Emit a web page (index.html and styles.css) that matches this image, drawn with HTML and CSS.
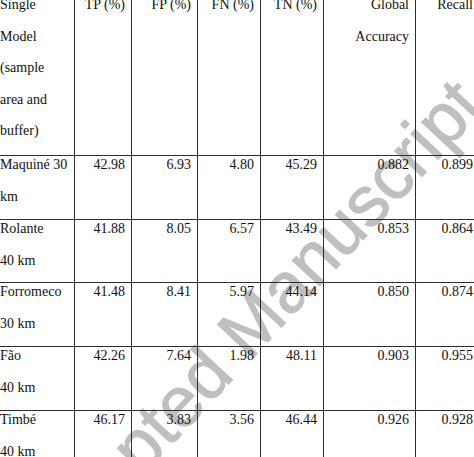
FILE: index.html
```html
<!DOCTYPE html>
<html lang="en">
<head>
<meta charset="utf-8">
<title>Single model accuracy</title>
<link rel="stylesheet" href="styles.css">
</head>
<body>
<div class="page">
  <div class="wm">Accepted Manuscript</div>
  <div class="tbl">
    <div class="c first"><span>Single</span><span>Model</span><span>(sample</span><span>area and</span><span>buffer)</span></div>
    <div class="c num"><span>TP (%)</span></div>
    <div class="c num"><span>FP (%)</span></div>
    <div class="c num"><span>FN (%)</span></div>
    <div class="c num"><span>TN (%)</span></div>
    <div class="c num"><span>Global</span><span>Accuracy</span></div>
    <div class="c num"><span>Recall</span></div>

    <div class="c first"><span>Maquiné 30</span><span>km</span></div>
    <div class="c num"><span>42.98</span></div>
    <div class="c num"><span>6.93</span></div>
    <div class="c num"><span>4.80</span></div>
    <div class="c num"><span>45.29</span></div>
    <div class="c num"><span>0.882</span></div>
    <div class="c num"><span>0.899</span></div>

    <div class="c first"><span>Rolante</span><span>40 km</span></div>
    <div class="c num"><span>41.88</span></div>
    <div class="c num"><span>8.05</span></div>
    <div class="c num"><span>6.57</span></div>
    <div class="c num"><span>43.49</span></div>
    <div class="c num"><span>0.853</span></div>
    <div class="c num"><span>0.864</span></div>

    <div class="c first"><span>Forromeco</span><span>30 km</span></div>
    <div class="c num"><span>41.48</span></div>
    <div class="c num"><span>8.41</span></div>
    <div class="c num"><span>5.97</span></div>
    <div class="c num"><span>44.14</span></div>
    <div class="c num"><span>0.850</span></div>
    <div class="c num"><span>0.874</span></div>

    <div class="c first"><span>Fão</span><span>40 km</span></div>
    <div class="c num"><span>42.26</span></div>
    <div class="c num"><span>7.64</span></div>
    <div class="c num"><span>1.98</span></div>
    <div class="c num"><span>48.11</span></div>
    <div class="c num"><span>0.903</span></div>
    <div class="c num"><span>0.955</span></div>

    <div class="c first"><span>Timbé</span><span>40 km</span></div>
    <div class="c num"><span>46.17</span></div>
    <div class="c num"><span>3.83</span></div>
    <div class="c num"><span>3.56</span></div>
    <div class="c num"><span>46.44</span></div>
    <div class="c num"><span>0.926</span></div>
    <div class="c num"><span>0.928</span></div>
  </div>
</div>
</body>
</html>
```
FILE: styles.css
```css
html, body {
  margin: 0;
  padding: 0;
  background: #fff;
}

.page {
  position: relative;
  width: 474px;
  height: 457px;
  overflow: hidden;
  background: #fff;
}

.wm {
  position: absolute;
  left: -10px;
  top: 552px;
  transform-origin: 0 0;
  transform: rotate(-47deg);
  font-family: "Liberation Sans", Arial, sans-serif;
  font-size: 71px;
  line-height: 1;
  color: #bfbfbf;
  white-space: nowrap;
  -webkit-text-stroke: 1px #bfbfbf;
  z-index: 0;
}

.tbl {
  position: relative;
  z-index: 1;
  display: grid;
  grid-template-columns: 75px 57px 66px 63px 63px 92px 64px;
  grid-template-rows: 160px 64px 63px 64px 64px 64px;
  margin-top: -4px;
  font-family: "Liberation Serif", "Times New Roman", serif;
  font-size: 14px;
  color: #111;
}

.c {
  box-sizing: border-box;
  border-right: 1px solid #2e2e2e;
  border-bottom: 1px solid #2e2e2e;
  display: flex;
  flex-direction: column;
  gap: 14.5px;
  line-height: 17px;
  white-space: nowrap;
}

.c span {
  display: block;
}

.first {
  align-items: flex-start;
  padding-left: 0;
}

.num {
  align-items: flex-end;
  padding-right: 6px;
}
```
